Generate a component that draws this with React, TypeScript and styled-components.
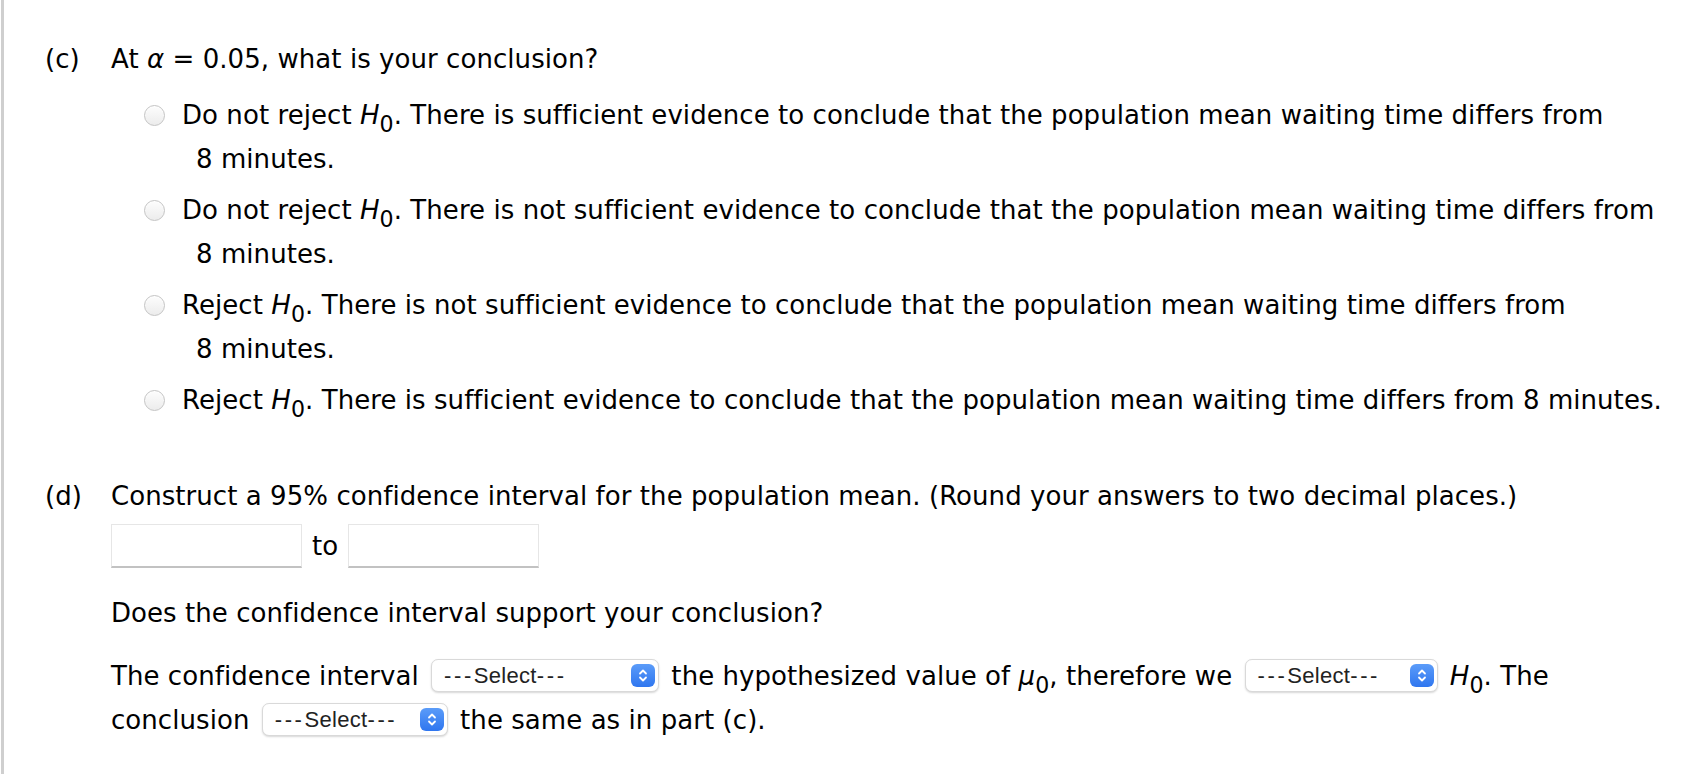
import React from 'react';
import styled, { createGlobalStyle } from 'styled-components';

const GlobalStyle = createGlobalStyle`
  html, body {
    margin: 0;
    padding: 0;
    background: #fff;
  }
  body {
    font-family: Verdana, 'DejaVu Sans', sans-serif;
    color: #000;
  }
`;

const Page = styled.div`
  min-height: 774px;
  box-sizing: border-box;
  border-left: 3px solid #cfcfcf;
  margin-left: 1px;
  padding: 37px 24px 0 41px;
  font-size: 26px;
  line-height: 44px;
  letter-spacing: 0.06px;
`;

const Part = styled.section<{ $gap?: number }>`
  display: grid;
  grid-template-columns: 66px 1fr;
  margin-bottom: ${(p) => p.$gap ?? 0}px;
`;

const PartLabel = styled.div`
  white-space: nowrap;
`;

const Body = styled.div`
  display: flex;
  flex-direction: column;
`;

const Prompt = styled.div``;

const Options = styled.div`
  display: flex;
  flex-direction: column;
  gap: 7px;
  margin-top: 12px;
  padding-left: 33px;
`;

const Option = styled.label`
  display: flex;
  align-items: flex-start;
`;

const Radio = styled.span`
  flex: none;
  width: 21px;
  height: 21px;
  margin-top: 12px;
  box-sizing: border-box;
  border-radius: 50%;
  border: 1px solid #c4c4c4;
  background: linear-gradient(#fdfdfd, #ececec);
  box-shadow: inset 0 1px 1px rgba(255, 255, 255, 0.8);
`;

const OptionText = styled.span`
  margin-left: 17px;
  padding-left: 14px;
  text-indent: -14px;
`;

const Var = styled.i`
  font-style: italic;
`;

const Sub = styled.sub`
  font-size: 0.85em;
  vertical-align: -0.34em;
  line-height: 0;
`;

const Interval = styled.div`
  display: flex;
  align-items: center;
  margin-top: 6px;
  margin-bottom: 23px;
`;

const AnswerBox = styled.input`
  width: 191px;
  height: 44px;
  box-sizing: border-box;
  border: 1px solid #e6e6e6;
  border-bottom: 2px solid #c2c2c2;
  background: #fff;
  outline: none;
`;

const Joiner = styled.span`
  margin: 0 10px;
`;

const Question = styled.div`
  margin-bottom: 19px;
`;

const Sentence = styled.div``;

const SelectBox = styled.span<{ $width: number }>`
  display: inline-flex;
  align-items: center;
  justify-content: space-between;
  width: ${(p) => p.$width}px;
  height: 33px;
  box-sizing: border-box;
  margin: 0 4px;
  padding: 0 3px 0 12px;
  vertical-align: middle;
  position: relative;
  top: -2px;
  border: 1px solid #d9d9d9;
  border-radius: 7px;
  background: #fff;
  box-shadow: 0 1px 2px rgba(0, 0, 0, 0.16);
  font-family: 'Liberation Sans', Arial, sans-serif;
  font-size: 22px;
  line-height: 31px;
  letter-spacing: 0.3px;
  color: #222;
  text-indent: 0;
`;

const Dashes = styled.span`
  letter-spacing: 2.6px;
`;

const Stepper = styled.span`
  display: flex;
  align-items: center;
  justify-content: center;
  width: 24px;
  height: 23px;
  border-radius: 6px;
  background: linear-gradient(#5b9cf9, #2f76ef);
`;

const Select: React.FC<{ width: number }> = ({ width }) => (
  <SelectBox $width={width}>
    <span>
      <Dashes>---</Dashes>Select<Dashes>---</Dashes>
    </span>
    <Stepper>
      <svg width="10" height="15" viewBox="0 0 10 15" fill="none">
        <path d="M2 5.5l3-3 3 3M2 9.5l3 3 3-3" stroke="#fff" strokeWidth="1.8" strokeLinecap="round" strokeLinejoin="round" />
      </svg>
    </Stepper>
  </SelectBox>
);

const H0 = () => (
  <>
    <Var>H</Var>
    <Sub>0</Sub>
  </>
);

const options = [
  <>Do not reject <H0 />. There is sufficient evidence to conclude that the population mean waiting time differs from 8&nbsp;minutes.</>,
  <>Do not reject <H0 />. There is not sufficient evidence to conclude that the population mean waiting time differs from 8&nbsp;minutes.</>,
  <>Reject <H0 />. There is not sufficient evidence to conclude that the population mean waiting time differs from 8&nbsp;minutes.</>,
  <>Reject <H0 />. There is sufficient evidence to conclude that the population mean waiting time differs from 8&nbsp;minutes.</>,
];

const App: React.FC = () => (
  <Page>
    <GlobalStyle />
    <Part $gap={52}>
      <PartLabel>(c)</PartLabel>
      <Body>
        <Prompt>
          At <Var>α</Var> = 0.05, what is your conclusion?
        </Prompt>
        <Options>
          {options.map((text, i) => (
            <Option key={i}>
              <Radio />
              <OptionText>{text}</OptionText>
            </Option>
          ))}
        </Options>
      </Body>
    </Part>
    <Part>
      <PartLabel>(d)</PartLabel>
      <Body>
        <Prompt>
          Construct a 95% confidence interval for the population mean. (Round your answers to two decimal places.)
        </Prompt>
        <Interval>
          <AnswerBox />
          <Joiner>to</Joiner>
          <AnswerBox />
        </Interval>
        <Question>Does the confidence interval support your conclusion?</Question>
        <Sentence>
          The confidence interval <Select width={228} /> the hypothesized value of <Var>μ</Var>
          <Sub>0</Sub>, therefore we <Select width={193} /> <H0 />. The conclusion <Select width={186} /> the same as
          in part (c).
        </Sentence>
      </Body>
    </Part>
  </Page>
);

export default App;
